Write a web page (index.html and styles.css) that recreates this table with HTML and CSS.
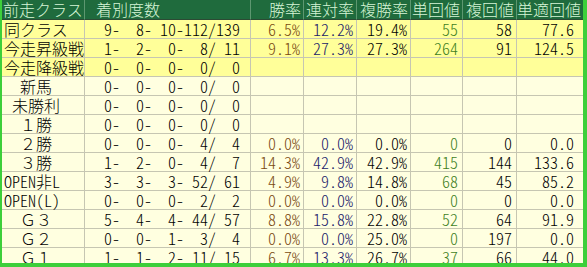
FILE: index.html
```html
<!DOCTYPE html>
<html lang="ja">
<head>
<meta charset="utf-8">
<title>前走クラス別成績</title>
<link rel="stylesheet" href="styles.css">
</head>
<body>
<div class="frame">
<table class="stats">
<colgroup>
<col class="w-cls"><col class="w-rec"><col class="w-53"><col class="w-53"><col class="w-54"><col class="w-52"><col class="w-54"><col class="w-66">
</colgroup>
<thead>
<tr>
<th class="h-cls">前走クラス</th><th class="h-rec">着別度数</th><th>勝率</th><th>連対率</th><th>複勝率</th><th>単回値</th><th>複回値</th><th>単適回値</th>
</tr>
</thead>
<tbody>
<tr class="hl">
<td class="cls">同クラス</td>
<td class="rec num"><span>9-</span><span>8-</span><span>10-</span><span>112/</span><span class="tot">139</span></td>
<td class="num wr">6.5%</td><td class="num pr">12.2%</td><td class="num sr">19.4%</td><td class="num tv">55</td><td class="num fv">58</td><td class="num av">77.6</td>
</tr>
<tr class="hl">
<td class="cls">今走昇級戦</td>
<td class="rec num"><span>1-</span><span>2-</span><span>0-</span><span>8/</span><span class="tot">11</span></td>
<td class="num wr">9.1%</td><td class="num pr">27.3%</td><td class="num sr">27.3%</td><td class="num tv">264</td><td class="num fv">91</td><td class="num av">124.5</td>
</tr>
<tr class="hl">
<td class="cls">今走降級戦</td>
<td class="rec num"><span>0-</span><span>0-</span><span>0-</span><span>0/</span><span class="tot">0</span></td>
<td></td><td></td><td></td><td></td><td></td><td></td>
</tr>
<tr>
<td class="cls ind">新馬</td>
<td class="rec num"><span>0-</span><span>0-</span><span>0-</span><span>0/</span><span class="tot">0</span></td>
<td></td><td></td><td></td><td></td><td></td><td></td>
</tr>
<tr>
<td class="cls ind-half">未勝利</td>
<td class="rec num"><span>0-</span><span>0-</span><span>0-</span><span>0/</span><span class="tot">0</span></td>
<td></td><td></td><td></td><td></td><td></td><td></td>
</tr>
<tr>
<td class="cls ind">１勝</td>
<td class="rec num"><span>0-</span><span>0-</span><span>0-</span><span>0/</span><span class="tot">0</span></td>
<td></td><td></td><td></td><td></td><td></td><td></td>
</tr>
<tr>
<td class="cls ind">２勝</td>
<td class="rec num"><span>0-</span><span>0-</span><span>0-</span><span>4/</span><span class="tot">4</span></td>
<td class="num wr">0.0%</td><td class="num pr">0.0%</td><td class="num sr">0.0%</td><td class="num tv">0</td><td class="num fv">0</td><td class="num av">0.0</td>
</tr>
<tr>
<td class="cls ind">３勝</td>
<td class="rec num"><span>1-</span><span>2-</span><span>0-</span><span>4/</span><span class="tot">7</span></td>
<td class="num wr">14.3%</td><td class="num pr">42.9%</td><td class="num sr">42.9%</td><td class="num tv">415</td><td class="num fv">144</td><td class="num av">133.6</td>
</tr>
<tr>
<td class="cls num">OPEN非L</td>
<td class="rec num"><span>3-</span><span>3-</span><span>3-</span><span>52/</span><span class="tot">61</span></td>
<td class="num wr">4.9%</td><td class="num pr">9.8%</td><td class="num sr">14.8%</td><td class="num tv">68</td><td class="num fv">45</td><td class="num av">85.2</td>
</tr>
<tr>
<td class="cls num">OPEN(L)</td>
<td class="rec num"><span>0-</span><span>0-</span><span>0-</span><span>2/</span><span class="tot">2</span></td>
<td class="num wr">0.0%</td><td class="num pr">0.0%</td><td class="num sr">0.0%</td><td class="num tv">0</td><td class="num fv">0</td><td class="num av">0.0</td>
</tr>
<tr>
<td class="cls ind">Ｇ３</td>
<td class="rec num"><span>5-</span><span>4-</span><span>4-</span><span>44/</span><span class="tot">57</span></td>
<td class="num wr">8.8%</td><td class="num pr">15.8%</td><td class="num sr">22.8%</td><td class="num tv">52</td><td class="num fv">64</td><td class="num av">91.9</td>
</tr>
<tr>
<td class="cls ind">Ｇ２</td>
<td class="rec num"><span>0-</span><span>0-</span><span>1-</span><span>3/</span><span class="tot">4</span></td>
<td class="num wr">0.0%</td><td class="num pr">0.0%</td><td class="num sr">25.0%</td><td class="num tv">0</td><td class="num fv">197</td><td class="num av">0.0</td>
</tr>
<tr>
<td class="cls ind">Ｇ１</td>
<td class="rec num"><span>1-</span><span>1-</span><span>2-</span><span>11/</span><span class="tot">15</span></td>
<td class="num wr">6.7%</td><td class="num pr">13.3%</td><td class="num sr">26.7%</td><td class="num tv">37</td><td class="num fv">66</td><td class="num av">44.0</td>
</tr>
</tbody>
</table>
</div>
</body>
</html>
```

FILE: styles.css
```css
html, body {
  margin: 0;
  padding: 0;
  background: #ffffff;
}

body {
  width: 587px;
  height: 267px;
  overflow: hidden;
}

.frame {
  box-sizing: border-box;
  width: 587px;
  height: 267px;
  border-left: 2px solid #3dcf3a;
  border-right: 4px solid #3dcf3a;
  border-bottom: 4px solid #3dcf3a;
  overflow: hidden;
  background: #ffffe0;
}

.stats {
  table-layout: fixed;
  width: 581px;
  border-collapse: separate;
  border-spacing: 0;
  font-family: "Noto Sans CJK JP", sans-serif;
  font-weight: 300;
  font-size: 16px;
  line-height: 18px;
  color: #000000;
}

.w-cls { width: 83px; }
.w-rec { width: 166px; }
.w-53 { width: 53px; }
.w-54 { width: 54px; }
.w-52 { width: 52px; }
.w-66 { width: 66px; }

.stats thead tr {
  height: 20px;
}

.stats th {
  background: #1f6b3d;
  color: #d6f5d6;
  font-weight: 300;
  line-height: 19px;
  text-align: right;
  padding: 0 2px 0 0;
  border-right: 1px solid #5d9770;
  border-bottom: 1px solid #2c4a34;
  white-space: nowrap;
}

.stats th.h-cls {
  text-align: left;
  padding-left: 1px;
}

.stats th.h-rec {
  text-align: left;
  padding-left: 11px;
}

.stats th:last-child {
  border-right: none;
}

.stats tbody tr {
  height: 19px;
  background: #ffffe0;
}

.stats tbody tr.hl {
  background: #ffff99;
}

.stats td {
  padding: 0 3px 0 0;
  border-right: 1px solid #c6c6b2;
  border-bottom: 1px solid #c6c6b2;
  white-space: nowrap;
  text-align: right;
}

.stats td:last-child {
  border-right: none;
}

.num {
  font-feature-settings: "hwid";
}

.stats td.cls {
  text-align: left;
  padding-left: 2px;
}

.stats td.ind {
  padding-left: 18px;
}

.stats td.ind-half {
  padding-left: 10px;
}

.stats td.rec {
  padding-right: 10px;
}

.rec span {
  display: inline-block;
  width: 32px;
  text-align: right;
}

.rec span.tot {
  width: 24px;
}

.wr { color: #7a4a12; }
.pr { color: #22226a; }
.sr { color: #000000; }
.stats td.tv { color: #3f7f1f; padding-right: 4px; }
.stats td.fv { padding-right: 4px; }
.stats td.av { padding-right: 9px; }
```
